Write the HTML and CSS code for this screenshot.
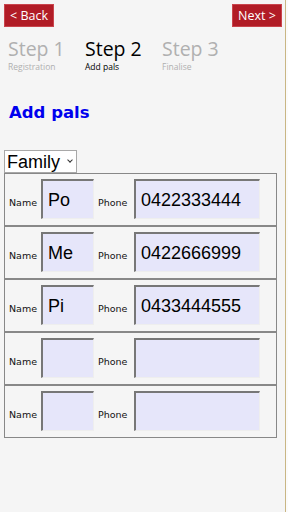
FILE: index.html
```html
<!DOCTYPE html>
<html lang="en">
<head>
    <meta charset="UTF-8">
    <meta name="viewport" content="width=device-width, initial-scale=1.0">
    <title>Add pals</title>
    <link rel="stylesheet" href="styles.css">
</head>
<body>
<div class="page">

    <header class="top-bar">
        <button class="nav-btn">&lt; Back</button>
        <button class="nav-btn">Next &gt;</button>
    </header>

    <nav class="steps">
        <div class="step">
            <span class="step-title">Step 1</span>
            <span class="step-sub">Registration</span>
        </div>
        <div class="step active">
            <span class="step-title">Step 2</span>
            <span class="step-sub">Add pals</span>
        </div>
        <div class="step">
            <span class="step-title">Step 3</span>
            <span class="step-sub">Finalise</span>
        </div>
    </nav>

    <h2 class="heading">Add pals</h2>

    <div class="select-wrap">
        <select class="group-select">
            <option>Family</option>
            <option>Friends</option>
            <option>Work</option>
        </select>
    </div>

    <div class="pal-list">
        <div class="pal-row">
            <label class="lbl lbl-name">Name</label>
            <input type="text" class="in-name" value="Po">
            <label class="lbl lbl-phone">Phone</label>
            <input type="text" class="in-phone" value="0422333444">
        </div>
        <div class="pal-row">
            <label class="lbl lbl-name">Name</label>
            <input type="text" class="in-name" value="Me">
            <label class="lbl lbl-phone">Phone</label>
            <input type="text" class="in-phone" value="0422666999">
        </div>
        <div class="pal-row">
            <label class="lbl lbl-name">Name</label>
            <input type="text" class="in-name" value="Pi">
            <label class="lbl lbl-phone">Phone</label>
            <input type="text" class="in-phone" value="0433444555">
        </div>
        <div class="pal-row">
            <label class="lbl lbl-name">Name</label>
            <input type="text" class="in-name">
            <label class="lbl lbl-phone">Phone</label>
            <input type="text" class="in-phone">
        </div>
        <div class="pal-row">
            <label class="lbl lbl-name">Name</label>
            <input type="text" class="in-name">
            <label class="lbl lbl-phone">Phone</label>
            <input type="text" class="in-phone">
        </div>
    </div>

</div>
</body>
</html>
```

FILE: styles.css
```css
html {
    background-color: #fbfbfb;
}

body {
    margin: 0;
    font-family: "Open Sans", sans-serif;
}

.page {
    width: 285px;
    min-height: 512px;
    background-color: #f5f5f5;
    border-right: 1px solid #c9b684;
}

.top-bar {
    display: flex;
    justify-content: space-between;
    padding: 4px 3px 0 4px;
}

.nav-btn {
    width: 50px;
    height: 23px;
    padding: 0;
    background-color: #b11c26;
    color: #fff;
    border: 1px solid #c9444c;
    font-family: "Open Sans", sans-serif;
    font-size: 12.5px;
}

.steps {
    display: flex;
    padding: 11px 0 0 8px;
}

.step {
    width: 77px;
    display: flex;
    flex-direction: column;
    color: #b0b0b0;
}

.step.active {
    color: #000;
}

.step-title {
    font-size: 19.5px;
    line-height: 22px;
}

.step-sub {
    font-size: 8.5px;
    line-height: 10px;
    margin-top: 2px;
}

.heading {
    margin: 30px 0 0 9px;
    font-family: "DejaVu Sans", sans-serif;
    font-size: 16.5px;
    line-height: 22px;
    color: #0000ee;
}

.select-wrap {
    position: relative;
    width: 73px;
    margin: 26px 0 0 4px;
}

/* small chevron in place of the native arrow */
.select-wrap::after {
    content: "";
    position: absolute;
    left: 64px;
    top: 8px;
    width: 3px;
    height: 3px;
    border-right: 1px solid #333;
    border-bottom: 1px solid #333;
    transform: rotate(45deg);
    pointer-events: none;
}

.group-select {
    display: block;
    width: 73px;
    height: 23px;
    padding: 0 0 0 2px;
    font-family: "Liberation Sans", Arial, sans-serif;
    font-size: 18px;
    background-color: #fff;
    border: 1px solid #a8a8a8;
    border-radius: 0;
    color: #000;
    appearance: none;
    -webkit-appearance: none;
}

.pal-list {
    margin-left: 4px;
    width: 273px;
}

.pal-row {
    box-sizing: border-box;
    height: 53px;
    border: 1px solid #888;
    padding: 5px 4px 0 4px;
    display: flex;
    align-items: baseline;
}

.lbl {
    font-family: "DejaVu Sans", sans-serif;
    font-size: 9.5px;
    color: #111;
}

.lbl-name {
    width: 32px;
}

.lbl-phone {
    width: 36px;
    margin-left: 4px;
}

.pal-row input {
    box-sizing: border-box;
    height: 40px;
    padding: 2px 5px 0 5px;
    background-color: #e6e6fa;
    border-style: solid;
    border-width: 2px 1px 1px 2px;
    border-color: #777 #eee #eee #777;
    font-family: "Liberation Sans", Arial, sans-serif;
    font-size: 18px;
    color: #000;
    outline: none;
}

.in-name {
    width: 53px;
}

.in-phone {
    width: 126px;
}
```
